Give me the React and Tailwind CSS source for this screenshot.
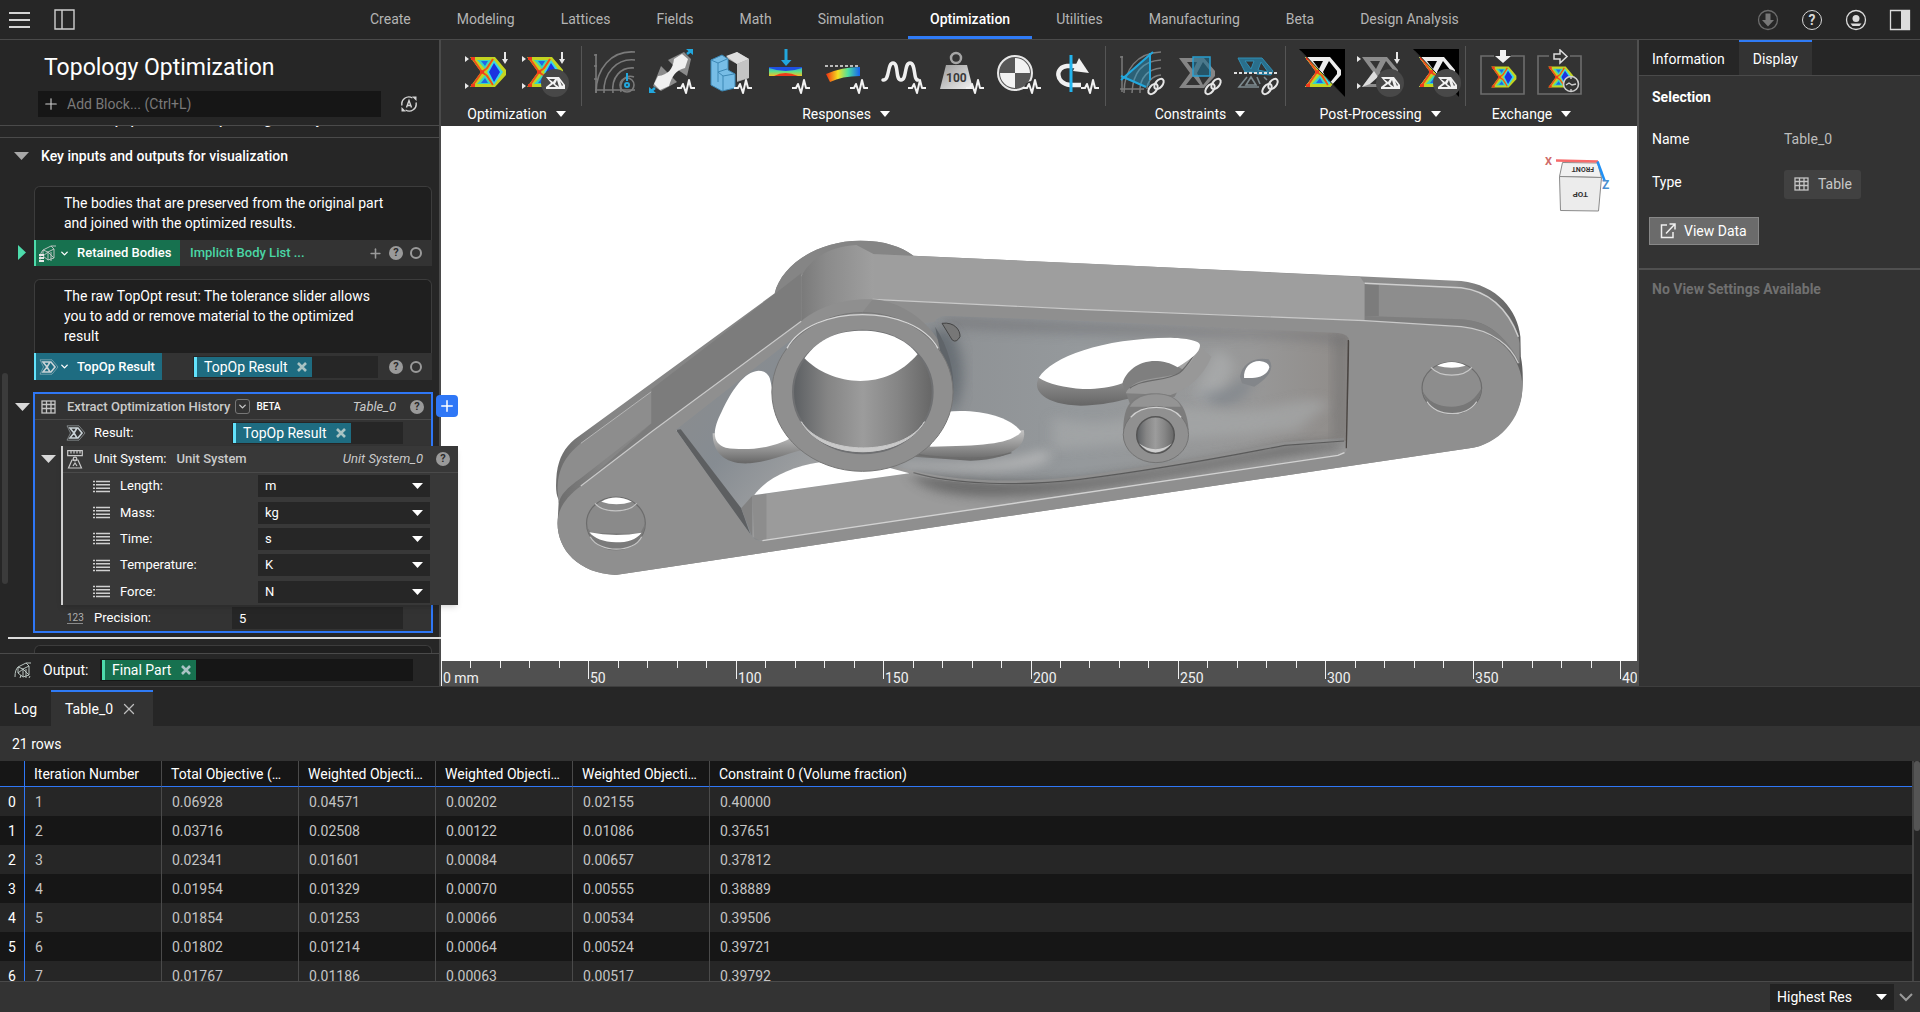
import React, { useState } from 'react';
import { X, ChevronDown, Plus } from 'lucide-react';

const MENU = ['Create', 'Modeling', 'Lattices', 'Fields', 'Math', 'Simulation', 'Optimization', 'Utilities', 'Manufacturing', 'Beta', 'Design Analysis'];

const UNITS = [
  { label: 'Length', options: ['m', 'cm', 'mm', 'in', 'ft'] },
  { label: 'Mass', options: ['kg', 'g', 'lb'] },
  { label: 'Time', options: ['s', 'ms', 'min'] },
  { label: 'Temperature', options: ['K', 'C', 'F'] },
  { label: 'Force', options: ['N', 'kN', 'lbf'] },
];

const COLUMNS = ['Iteration Number', 'Total Objective (…', 'Weighted Objecti…', 'Weighted Objecti…', 'Weighted Objecti…', 'Constraint 0 (Volume fraction)'];

const ROWS = [
  ['1', '0.06928', '0.04571', '0.00202', '0.02155', '0.40000'],
  ['2', '0.03716', '0.02508', '0.00122', '0.01086', '0.37651'],
  ['3', '0.02341', '0.01601', '0.00084', '0.00657', '0.37812'],
  ['4', '0.01954', '0.01329', '0.00070', '0.00555', '0.38889'],
  ['5', '0.01854', '0.01253', '0.00066', '0.00534', '0.39506'],
  ['6', '0.01802', '0.01214', '0.00064', '0.00524', '0.39721'],
  ['7', '0.01767', '0.01186', '0.00063', '0.00517', '0.39792'],
];

/* ---------- small icons ---------- */

const Caret = ({ className = 'w-[10px] h-[6px]' }) => (
  <svg viewBox="0 0 10 6" preserveAspectRatio="none" className={`shrink-0 fill-current ${className}`}>
    <path d="M0 0h10L5 6z" />
  </svg>
);

const HelpDot = () => (
  <button aria-label="Help" className="w-[14px] h-[14px] shrink-0 rounded-full bg-[#9a9a9a] text-[#2a2a2a] text-[11px] leading-[14px] font-bold text-center">
    ?
  </button>
);

const Ring = () => <span className="w-[12px] h-[12px] shrink-0 rounded-full border-2 border-[#9a9a9a]" />;

const TableIcon = () => (
  <svg viewBox="0 0 15 14" className="w-[15px] h-[14px] shrink-0" fill="none" stroke="#c4c4c4" strokeWidth="1.3">
    <rect x="1" y="1" width="13" height="12" />
    <path d="M1 4.500h13M1 8.500h13M5.500 1v12M10 1v12" />
  </svg>
);

const ListIcon = () => (
  <svg viewBox="0 0 17 13" className="w-[17px] h-[13px] shrink-0" stroke="#d0d0d0" strokeWidth="1.6">
    <path d="M0 1.500h2M3 1.500h14M0 4.800h2M3 4.800h14M0 8.200h2M3 8.200h14M0 11.500h2M3 11.500h14" />
  </svg>
);

const ResultIcon = () => (
  <svg viewBox="0 0 20 16" className="w-[20px] h-[16px] shrink-0" fill="none" stroke="#c9d2d6">
    <path d="M1 .8h12l6 7.200-6 7.200H1L4.500 8z" strokeWidth=".8" opacity=".6" />
    <path d="M4 3h8l4 5-4 5H4l4-5zM11 3L8 8l3 5" strokeWidth="1.600" />
  </svg>
);

const BodyIcon = ({ list }) => (
  <svg viewBox="0 0 18 18" className="w-[18px] h-[18px] shrink-0" fill="none" stroke="#b9c4c0" strokeWidth="1">
    <path d="M4 6l8-4 5 0M4 6l5 2 6-3-3-3M4 6v6l5 4V8M9 16l6-2V5M4 12l5-4 6 6M1 16c0-5 1-8 3-10M12 8v9" />
    {list ? <path d="M0 11h5M0 14h5M0 17h5" strokeWidth="2" stroke="#e8e8e8" /> : <path d="M6 17l1-3M15 17l1-2" />}
  </svg>
);

const UnitIcon = () => (
  <svg viewBox="0 0 16 19" className="w-[16px] h-[19px] shrink-0" fill="none" stroke="#c8c8c8" strokeWidth="1.200">
    <path d="M.7.7h14.600v5H.7zM4 1v2.500M7 1v2.500M10 1v2.500M13 1v2.500" />
    <path d="M5 10L1.500 18h13L11 10z" />
    <circle cx="8" cy="9" r="1.800" />
    <path d="M6 16l2-3 2 3" />
  </svg>
);

/* ---------- toolbar icons, all on a 48x48 box ---------- */

// heat coloured truss
const HeatTruss = ({ transform }) => (
  <g transform={transform}>
    <path d="M6 8h25l11 13v5L31 38H6l11-15z" fill="#c3d420" />
    <g filter="url(#heatSoft)">
      <path d="M9 10l9 13-9 13M18 23l5-4 6-9M18 23l5 4 6 9" fill="none" stroke="#f0501a" strokeWidth="2" />
      <path d="M13 11h14l-6 9z" fill="#38d6c0" />
      <path d="M13 35h14l-6-9z" fill="#38d6c0" />
      <path d="M17 12h7l-3 5zM17 34h7l-3-5z" fill="#1d68e8" />
      <path d="M30 11l9 12-9 13-7-13z" fill="#38d6e8" />
      <path d="M30 14l6 9-6 10-5-10z" fill="#1a32e0" />
      <path d="M7 9.500h4M7 36.500h4M16 23h4" stroke="#f03a1a" strokeWidth="3" />
    </g>
  </g>
);

const PlainTruss = ({ transform, color = '#ededed' }) => (
  <path
    transform={transform}
    fill={color}
    fillRule="evenodd"
    d="M6 8h25l11 13v5L31 38H6l11-15zM14 12h10l-4 8zM13 35h14l-7-9zM30 12l8 10v3l-8 10-6-12z"
  />
);

const Arrows = () => (
  <g fill="#e8e8e8">
    <path d="M1 7l4 3-4 3zM1 34l4 3-4 3z" />
    <path d="M40 3h2v7h2l-3 5-3-5h2z" />
  </g>
);

const TrussBadge = () => (
  <g>
    <circle cx="34" cy="34" r="14" fill="#484848" />
    <path
      fill="#f2f2f2"
      fillRule="evenodd"
      d="M25 28h13l6 8v4H25v-2l5-4zM28 30l4 3 2-3zM36 31l-2 4 4 3zM39 32l2 5 1-1zM28 38h7l-3-3z"
    />
  </g>
);

const PulseBadge = () => (
  <path d="M28 39h4l2-4 3 9 3-13 2 8h4" fill="none" stroke="#f2f2f2" strokeWidth="2" strokeLinejoin="round" />
);

const LinkBadge = () => (
  <g fill="#333" stroke="#e6e6e6" strokeWidth="2">
    <ellipse cx="34" cy="40" rx="3.500" ry="6" transform="rotate(40 34 40)" />
    <ellipse cx="40" cy="35" rx="3.500" ry="6" transform="rotate(40 40 35)" fill="none" />
  </g>
);

const ICONS = {
  topOpt: <><HeatTruss /><Arrows /></>,
  topOptFine: <><HeatTruss /><Arrows /><TrussBadge /></>,
  field: (
    <g fill="none" stroke="#7b7b7b" strokeWidth="1.600">
      <path d="M5 5v39M3 6h3M3 17h3M3 30h3M4 41h40" />
      <path d="M44 3C20 1 5 20 5 44M44 11C26 9 12 24 13 44M43 19C30 18 20 28 22 44M43 28c-8-3-15 4-13 15" />
      <circle cx="36" cy="36" r="7" />
      <circle cx="36" cy="36" r="2" stroke="#22a7dd" strokeWidth="2" />
      <path d="M36 24v8" stroke="#22a7dd" strokeWidth="2" />
    </g>
  ),
  stress: (
    <>
      <path d="M19 11L35 3l7 7-4 17-9-6zM12 17l-8 20 8 5 16-9z" fill="#8b8b8b" />
      <path d="M25 10l8-5 6 5-3 9c-9 2-13 8-16 18l-9 4-6-6 4-8c10-1 15-7 16-17z" fill="#f0f0f0" />
      <path d="M38 5l5-4M6 39l-5 4" stroke="#22a7dd" strokeWidth="2.500" />
      <path d="M37 0h7v6zM0 38v6h7z" fill="#22a7dd" />
      <PulseBadge />
    </>
  ),
  volume: (
    <>
      <path d="M20 9l11-6 12 7v19l-12 4V15z" fill="#a9a9a9" />
      <path d="M20 7l11-4 12 7-12 5z" fill="#dedede" />
      <path d="M31 15l12-5v19l-12 3z" fill="#c4c4c4" />
      <path d="M5 11l11-5 6 4v11l7 4v14l-13 3-11-6z" fill="#77bde6" stroke="#3d88b5" strokeWidth="1" />
      <path d="M5 11l7 3v19M12 14l9-4M12 23l9-3M12 23l5 4 11-2M17 27v15" fill="none" stroke="#3d88b5" strokeWidth="1" />
      <PulseBadge />
    </>
  ),
  displacement: (
    <>
      <rect x="5" y="18" width="33" height="9" fill="url(#bandV)" />
      <path d="M5 18h33v1q-16 6-33 0z" fill="#1e50e0" />
      <path d="M10 27q11-6 24 0z" fill="#ee3a18" />
      <path d="M20.500 0h3v11h4L22 17l-5-6h3.500z" fill="#22a7dd" />
      <PulseBadge />
    </>
  ),
  bend: (
    <>
      <path d="M4 25q16-7 34-7v9q-18 0-30 6z" fill="url(#bandH)" />
      <path d="M3 17h35" stroke="#e8e8e8" strokeWidth="1.600" strokeDasharray="3 2" />
      <PulseBadge />
    </>
  ),
  wave: (
    <>
      <path d="M3 31c7 1 4-17 10-17s2 17 8 17 3-17 9-17 3 17 8 17" fill="none" stroke="#f0f0f0" strokeWidth="3.500" strokeLinecap="round" />
      <PulseBadge />
    </>
  ),
  mass: (
    <>
      <circle cx="18" cy="9" r="5" fill="none" stroke="#a5a5a5" strokeWidth="2.500" />
      <path d="M8 16h21l6 24H2z" fill="url(#metal)" />
      <text x="8" y="33" fontSize="12" fontWeight="700" fill="#3a3a3a">100</text>
      <PulseBadge />
    </>
  ),
  balance: (
    <>
      <circle cx="20" cy="24" r="17" fill="#575757" stroke="#e8e8e8" strokeWidth="2" />
      <path d="M20 24V9a15 15 0 0 1 15 15zM20 24v15A15 15 0 0 1 5 24z" fill="#f2f2f2" />
      <circle cx="37" cy="40" r="8" fill="#333" />
      <PulseBadge />
    </>
  ),
  rotate: (
    <>
      <path d="M28 36H17C2 34 2 18 14 17h14" fill="none" stroke="#f0f0f0" strokeWidth="4.500" />
      <path d="M26 9l10 15-16-2z" fill="#f0f0f0" />
      <path d="M18 6v37" stroke="#22b4ee" strokeWidth="3" />
      <PulseBadge />
    </>
  ),
  fieldLink: (
    <>
      <g fill="none" stroke="#7b7b7b" strokeWidth="1.500">
        <path d="M3 7v36M1 8h3M1 40h24M42 3C18 4 5 20 5 44M42 11C25 12 14 22 13 44M42 19C30 20 20 28 21 44M42 26c-9 1-14 7-14 14" />
      </g>
      <path d="M31 4v32l-4 2L3 29z" fill="#22a7dd" opacity=".4" />
      <path d="M34 3L2 31M31 4v27M2 27l25 11" fill="none" stroke="#22a7dd" strokeWidth="2" />
      <LinkBadge />
    </>
  ),
  bodyLink: (
    <>
      <PlainTruss color="#858585" transform="translate(-3 1)" />
      <rect x="17" y="8" width="17" height="19" fill="#1b6f92" opacity=".55" />
      <rect x="17" y="8" width="17" height="19" fill="none" stroke="#2a9fd0" strokeWidth="1.500" />
      <LinkBadge />
    </>
  ),
  symmetry: (
    <>
      <path
        d="M5 9h24l11 13-2 4-14-1-5-2h-7zM12 12h9l-3 8zM28 13l7 10-10-2z"
        fill="#2a6f8c"
        stroke="#2f8fb5"
        strokeWidth="1"
        fillRule="evenodd"
      />
      <path d="M14 28L6 38h20M13 36l5-8 5 8zM24 28l3 7M31 28l3 3" fill="none" stroke="#7d8b90" strokeWidth="1.600" />
      <path d="M1 24h43" stroke="#ddd" strokeWidth="1.800" strokeDasharray="3 2" />
      <LinkBadge />
    </>
  ),
  postHeat: (
    <>
      <path d="M0 0h46v48z" fill="#000" />
      <PlainTruss />
      <g clipPath="url(#lowerHalf)"><HeatTruss /></g>
      <path d="M2 2l40 42" stroke="#222" strokeWidth="1" />
    </>
  ),
  postPlain: (
    <>
      <PlainTruss color="#8c8c8c" />
      <path d="M6 38L18 22l4 6-8 7z" fill="#dedede" />
      <Arrows />
      <TrussBadge />
    </>
  ),
  postFine: (
    <>
      <path d="M0 0h46v48z" fill="#000" />
      <PlainTruss />
      <g clipPath="url(#lowerHalf)"><HeatTruss /></g>
      <path d="M2 2l40 42" stroke="#222" strokeWidth="1" />
      <TrussBadge />
    </>
  ),
  importHeat: (
    <>
      <path d="M15 7H2v38h43V7H32" fill="none" stroke="#6d6d6d" strokeWidth="1.600" />
      <path d="M21 1h6v6h5l-8 7-8-7h5z" fill="#f2f2f2" />
      <HeatTruss transform="translate(8 12) scale(.7)" />
    </>
  ),
  exportHeat: (
    <>
      <path d="M13 7H2v38h43V7H34" fill="none" stroke="#6d6d6d" strokeWidth="1.600" />
      <path d="M18 5h6V1l7 6.500-7 6.500v-4h-6z" fill="none" stroke="#ddd" strokeWidth="1.500" />
      <HeatTruss transform="translate(8 12) scale(.7)" />
      <circle cx="35" cy="35" r="7.500" fill="#333" stroke="#cfcfcf" strokeWidth="1.600" />
      <path d="M30 36l3-2 3 2 4-1M35 28v2M35 40v2" fill="none" stroke="#cfcfcf" strokeWidth="1.400" />
    </>
  ),
};

const GROUPS = [
  { name: 'Optimization', icons: ['topOpt', 'topOptFine'], size: 'w-[141px] pl-[18px] pr-2' },
  { name: 'Responses', icons: ['field', 'stress', 'volume', 'displacement', 'bend', 'wave', 'mass', 'balance', 'rotate'], size: 'w-[524px] pl-1' },
  { name: 'Constraints', icons: ['fieldLink', 'bodyLink', 'symmetry'], size: 'w-[180px] pl-2' },
  { name: 'Post-Processing', icons: ['postHeat', 'postPlain', 'postFine'], size: 'w-[180px] pl-2' },
  { name: 'Exchange', icons: ['importHeat', 'exportHeat'], size: 'w-[123px] pl-2' },
];

const Toolbar = () => (
  <div className="h-[86px] shrink-0 flex bg-[#333] overflow-hidden">
    <svg className="absolute w-0 h-0">
      <defs>
        <linearGradient id="bandV" x2="0" y2="1"><stop offset="0" stopColor="#2aa0e8" /><stop offset=".5" stopColor="#5fe08a" /><stop offset="1" stopColor="#f5c020" /></linearGradient>
        <linearGradient id="bandH"><stop offset="0" stopColor="#f02c10" /><stop offset=".35" stopColor="#f5e020" /><stop offset=".65" stopColor="#4be0a0" /><stop offset="1" stopColor="#1660f0" /></linearGradient>
        <linearGradient id="metal" x2="1" y2="1"><stop offset="0" stopColor="#9a9a9a" /><stop offset="1" stopColor="#f2f2f2" /></linearGradient>
        <filter id="heatSoft"><feGaussianBlur stdDeviation=".7" /></filter>
        <clipPath id="lowerHalf"><path d="M0 0L46 48H0z" /></clipPath>
      </defs>
    </svg>
    {GROUPS.map((group, i) => (
      <React.Fragment key={group.name}>
        {i > 0 && <div className="w-px h-[60px] mt-[6px] bg-[#555] -ml-px" />}
        <div className={`flex flex-col pt-[9px] ${group.size}`}>
          <div className="flex">
            {group.icons.map((icon) => (
              <button key={icon} aria-label={icon} className="flex-1 flex justify-center">
                <svg viewBox="0 0 48 48" className="w-12 h-12">{ICONS[icon]}</svg>
              </button>
            ))}
          </div>
          <button className="flex items-center justify-center gap-[9px] h-[20px] mt-[7px] text-white">
            {group.name}
            <Caret />
          </button>
        </div>
      </React.Fragment>
    ))}
  </div>
);

/* ---------- top bar ---------- */

const TopBar = () => (
  <header className="relative h-10 shrink-0 flex items-stretch bg-[#262626] border-b border-[#4a4a4a]">
    <div className="w-[348px] shrink-0 flex items-center gap-6 pl-[9px]">
      <button aria-label="Menu">
        <svg viewBox="0 0 21 18" className="w-[21px] h-[18px]" stroke="#d4d4d4" strokeWidth="2">
          <path d="M0 2h21M0 9h21M0 16h21" />
        </svg>
      </button>
      <button aria-label="Toggle left panel">
        <svg viewBox="0 0 21 21" className="w-[21px] h-[21px]" fill="none" stroke="#cfcfcf" strokeWidth="1.400">
          <path d="M1 1h19v19H1zM8 1v19" />
        </svg>
      </button>
    </div>
    <nav className="flex gap-[2px]">
      {MENU.map((item) => (
        <button
          key={item}
          className={`px-[22px] border-b-3 whitespace-nowrap pt-[2px] ${item === 'Optimization' ? 'border-[#2f7bf6] text-white font-medium' : 'border-transparent text-[#b4b4b4]'}`}
        >
          {item}
        </button>
      ))}
    </nav>
    <div className="ml-auto flex items-center gap-[22px] pr-[9px]">
      <button aria-label="Download">
        <svg viewBox="0 0 22 22" className="w-[22px] h-[22px]">
          <circle cx="11" cy="11" r="9.500" fill="none" stroke="#6c6c6c" strokeWidth="1.300" />
          <path d="M8.500 4.500h5V11H17l-6 6.500L5 11h3.500z" fill="#777" />
        </svg>
      </button>
      <button aria-label="Help" className="w-[22px] h-[22px] flex items-center justify-center">
        <span className="w-[20px] h-[20px] rounded-full border border-[#d8d8d8] text-[#d8d8d8] font-bold leading-[18px]">?</span>
      </button>
      <button aria-label="Account">
        <svg viewBox="0 0 22 22" className="w-[22px] h-[22px]" fill="#dcdcdc">
          <circle cx="11" cy="11" r="9.500" fill="none" stroke="#dcdcdc" strokeWidth="1.300" />
          <circle cx="11" cy="9.500" r="3.500" />
          <path d="M5.500 14.500h11l-2 2.500h-7z" />
        </svg>
      </button>
      <button aria-label="Toggle right panel">
        <svg viewBox="0 0 22 22" className="w-[22px] h-[22px]">
          <path d="M1.500 1.500h19v19h-19z" fill="none" stroke="#dcdcdc" strokeWidth="1.300" />
          <path d="M12 1h9v20h-9z" fill="#dcdcdc" />
        </svg>
      </button>
    </div>
  </header>
);

/* ---------- left tree ---------- */

const Chip = ({ tone, children }) => (
  <span
    className={`h-[20px] flex items-center gap-[10px] pl-[7px] pr-[5px] border-l-3 text-[14px] text-white whitespace-nowrap ${tone === 'green' ? 'bg-[#17714f] border-[#4ddbab]' : 'bg-[#1e6c81] border-[#62e2fb]'}`}
  >
    {children}
    <button aria-label={`Remove ${children}`} className="text-[#a9c3c3]">
      <svg viewBox="0 0 10 10" className="w-[10px] h-[10px]" stroke="currentColor" strokeWidth="2.600">
        <path d="M1 1l8 8M9 1L1 9" />
      </svg>
    </button>
  </span>
);

const Comment = ({ children }) => (
  <div className="rounded-t-[6px] border border-b-0 border-[#3c3c3c] bg-[#1f1f1f] pl-[29px] pr-[44px] pt-[6px] pb-[7px] leading-[20px] text-white">
    {children}
  </div>
);

const BlockPanel = () => (
  <section className="relative -mx-px mt-3 border-2 border-[#2f77f6] bg-[#333] text-[13px]">
    <button aria-label="Collapse block" className="absolute -left-5 top-[9px] text-[#d8d8d8]">
      <Caret className="w-[15px] h-[8px]" />
    </button>
    <button aria-label="Add block after" className="absolute z-20 -right-[27px] top-px w-[22px] h-[22px] rounded-[4px] bg-[#2f77f6] text-white flex items-center justify-center">
      <Plus size={18} strokeWidth={2} />
    </button>

    <div className="h-[26px] flex items-center pl-[6px] pr-[7px] border-b border-[#4a4a4a] text-[#cacaca]">
      <TableIcon />
      <span className="ml-[11px] font-medium">Extract Optimization History</span>
      <button aria-label="Variants" className="ml-[5px] w-[15px] h-[15px] rounded-[3px] border border-[#777] flex items-center justify-center">
        <ChevronDown size={11} strokeWidth={3} />
      </button>
      <span className="ml-[6px] text-[10px] font-medium text-white">BETA</span>
      <span className="ml-auto mr-[14px] italic">Table_0</span>
      <HelpDot />
    </div>

    <div className="h-[26px] flex items-center pl-[31px] pr-[28px] text-white">
      <ResultIcon />
      <span className="ml-[8px] flex-1">Result:</span>
      <div className="w-[171px] h-[22px] flex items-center pl-px bg-[#262626]">
        <Chip>TopOp Result</Chip>
      </div>
    </div>

    <div className="relative z-10 ml-[26px] -mr-[27px] bg-[#383838] border-l-2 border-[#cfcfcf] shadow-md text-white">
      <button aria-label="Collapse unit system" className="absolute -left-[22px] top-[9px] text-[#d8d8d8]">
        <Caret className="w-[15px] h-[8px]" />
      </button>
      <div className="h-[27px] flex items-center pl-[4px] pr-[8px] border-b border-[#4a4a4a]">
        <UnitIcon />
        <span className="ml-[11px]">Unit System:</span>
        <span className="ml-[10px] font-medium text-[#cacaca]">Unit System</span>
        <span className="ml-auto mr-[13px] italic text-[#cacaca]">Unit System_0</span>
        <HelpDot />
      </div>
      <div className="h-[132px] grid pl-[30px] pr-[28px]">
        {UNITS.map(({ label, options }) => (
          <div key={label} className="flex items-center">
            <ListIcon />
            <label htmlFor={label} className="ml-[10px] flex-1">{label}:</label>
            <div className="relative w-[172px]">
              <select id={label} className="block w-full h-[22px] pl-[7px] appearance-none bg-[#262626] text-white outline-none">
                {options.map((o) => <option key={o}>{o}</option>)}
              </select>
              <Caret className="absolute right-[7px] top-[8px] w-[11px] h-[6px] pointer-events-none" />
            </div>
          </div>
        ))}
      </div>
    </div>

    <div className="h-[26px] flex items-center pl-[32px] pr-[28px] text-white">
      <span className="w-[16px] text-[10px] leading-[11px] text-[#b0b0b0] border-b border-[#8a8a8a]">123</span>
      <label htmlFor="precision" className="ml-[11px] flex-1">Precision:</label>
      <input id="precision" defaultValue="5" className="w-[171px] h-[22px] px-[7px] bg-[#262626] outline-none" />
    </div>
  </section>
);

const Sidebar = () => (
  <aside className="relative z-10 w-[441px] shrink-0 flex flex-col bg-[#262626] border-r-2 border-[#4a4a4a]">
    <div className="h-[86px] shrink-0 border-b border-[#4a4a4a] pt-[11px]">
      <h1 className="pl-[44px] text-[23px] leading-[34px] text-white">Topology Optimization</h1>
      <div className="flex items-center mt-[6px] pl-[38px]">
        <div className="w-[343px] h-[26px] flex items-center bg-[#161616] pl-[4px]">
          <Plus size={18} strokeWidth={1.5} className="text-[#cfcfcf]" />
          <input aria-label="Add Block" placeholder="Add Block... (Ctrl+L)" className="ml-[7px] flex-1 bg-transparent outline-none placeholder-[#7a7a7a]" />
        </div>
        <button aria-label="Auto refresh" className="ml-[19px]">
          <svg viewBox="0 0 18 18" className="w-[18px] h-[18px]" fill="none" stroke="#d4d4d4" strokeWidth="1.400">
            <path d="M2 10.500A7 7 0 0 1 12.500 3M16 7.500A7 7 0 0 1 5.500 15" />
            <path d="M12 1.500h4.500V6zM1.500 12v4.500H6z" fill="#d4d4d4" stroke="none" />
            <path d="M6.500 12.500L9 5.500l2.500 7M7.500 10.500h3" />
          </svg>
        </button>
      </div>
    </div>
    <div className="h-[12px] shrink-0 border-b border-[#4a4a4a] overflow-hidden">
      <p className="-mt-[17px] pl-[41px] leading-[20px] font-medium text-white whitespace-nowrap">Blocks that populate the shape design library</p>
    </div>

    <div className="relative flex-1 pl-[34px] pr-[7px]">
      <div className="absolute left-[2px] top-[235px] w-[6px] h-[211px] rounded-full bg-[#3b3b3b]" />
      <button className="-ml-5 h-9 flex items-center gap-[12px] font-medium text-white">
        <Caret className="w-[15px] h-[8px] text-[#a8a8a8]" />
        Key inputs and outputs for visualization
      </button>

      <div className="mt-3">
        <Comment>The bodies that are preserved from the original part and joined with the optimized results.</Comment>
        <div className="relative h-[26px] flex items-center bg-[#333] pr-[10px] text-[13px] font-medium">
          <button aria-label="Expand Retained Bodies" className="absolute -left-4 top-[5px]">
            <svg viewBox="0 0 8 15" className="w-[8px] h-[15px]"><path d="M0 0l8 7.500L0 15z" fill="#4ddbab" /></svg>
          </button>
          <div className="h-full flex items-center w-[146px] pl-[3px] bg-[#17714f] border-l-2 border-[#4ddbab] text-white">
            <BodyIcon list />
            <ChevronDown size={11} strokeWidth={3} className="ml-[2px]" />
            <span className="ml-[7px] whitespace-nowrap">Retained Bodies</span>
          </div>
          <a href="#list" className="ml-[10px] mr-auto text-[#4ad6a5]">Implicit Body List ...</a>
          <button aria-label="Add" className="mr-[6px] text-[#9a9a9a]"><Plus size={15} strokeWidth={2.5} /></button>
          <HelpDot />
          <span className="w-[7px]" />
          <Ring />
        </div>
      </div>

      <div className="mt-[13px]">
        <Comment>The raw TopOpt resut: The tolerance slider allows you to add or remove material to the optimized result</Comment>
        <div className="h-[27px] flex items-center bg-[#333] pr-[10px]">
          <div className="h-full flex items-center w-[128px] pl-[3px] bg-[#1e6c81] border-l-2 border-[#62e2fb] text-[13px] text-white">
            <ResultIcon />
            <ChevronDown size={11} strokeWidth={3} />
            <span className="ml-[7px] font-medium whitespace-nowrap">TopOp Result</span>
          </div>
          <div className="ml-[31px] mr-auto w-[185px] h-[22px] flex items-center pl-px bg-[#262626]">
            <Chip>TopOp Result</Chip>
          </div>
          <HelpDot />
          <span className="w-[7px]" />
          <Ring />
        </div>
      </div>

      <BlockPanel />
      <div className="-ml-[26px] -mr-[9px] mt-1 h-[2px] bg-[#dcdcdc]" />
      <div className="mt-[6px] h-[8px] rounded-t-[6px] border border-b-0 border-[#3c3c3c] bg-[#1f1f1f]" />
    </div>

    <div className="h-[33px] shrink-0 flex items-center border-t border-[#4a4a4a] pl-[14px] pr-[26px] text-white">
      <BodyIcon />
      <span className="ml-[11px] w-[57px]">Output:</span>
      <div className="flex-1 h-[22px] flex items-center pl-[2px] bg-[#161616]">
        <Chip tone="green">Final Part</Chip>
      </div>
    </div>
  </aside>
);

/* ---------- viewport ---------- */

const Bracket = () => (
  <g transform="translate(-1 104) scale(.40816 .33333)">
    <defs>
      <linearGradient id="boss"><stop offset="0" stopColor="#7a7a7a" /><stop offset=".35" stopColor="#8b8b8b" /><stop offset="1" stopColor="#9f9f9f" /></linearGradient>
      <linearGradient id="bore"><stop offset="0" stopColor="#5c5f62" /><stop offset=".25" stopColor="#858585" /><stop offset=".5" stopColor="#9c9c9c" /><stop offset=".75" stopColor="#858585" /><stop offset="1" stopColor="#666" /></linearGradient>
      <linearGradient id="web"><stop offset="0" stopColor="#858b90" /><stop offset=".3" stopColor="#8b8e91" /><stop offset=".6" stopColor="#95999c" /><stop offset=".85" stopColor="#989898" /><stop offset="1" stopColor="#8f8b88" /></linearGradient>
      <linearGradient id="strut" x2="1" y2="1"><stop offset="0" stopColor="#8c8c8c" /><stop offset=".5" stopColor="#868c92" /><stop offset="1" stopColor="#a8a8a8" /></linearGradient>
      <linearGradient id="lip" x2="0" y2="1"><stop offset="0" stopColor="#c4c4c4" /><stop offset=".6" stopColor="#8c8c8c" /><stop offset="1" stopColor="#666" /></linearGradient>
      <linearGradient id="rim"><stop offset="0" stopColor="#6c6c6c" /><stop offset=".05" stopColor="#858585" /><stop offset=".93" stopColor="#8c8c8c" /><stop offset="1" stopColor="#5f5f5f" /></linearGradient>
      <filter id="soft" x="-30%" y="-60%" width="160%" height="220%"><feGaussianBlur stdDeviation="16" /></filter>
      <clipPath id="pocket"><path d="M578 600L860 330L1213 275Q1215 260 1240 258L1568 272L2200 309Q2228 312 2228 335L2222 655Q2222 672 2200 676L790 932Q775 934 765 920Z" /></clipPath>
    </defs>

    {/* whole silhouette, darker rims of the rear plate show through */}
    <path d="M430 1035C340 1030 288 960 288 880L291 810C282 790 284 760 286 730C292 680 305 655 330 628L820 190C835 110 920 32 1030 32C1090 32 1130 50 1160 77L2502 153C2590 165 2640 240 2647 320L2648 380C2655 420 2654 480 2648 510C2630 590 2580 645 2522 655L1372 862Z" fill="url(#rim)" />
    <path d="M820 190C835 110 920 32 1030 32C1090 32 1130 50 1160 77L1060 72L885 140Z" fill="#858585" />

    {/* rear lugs */}
    <path d="M288 780C288 720 305 680 345 640L518 485V580L345 745C310 775 295 795 291 820Z" fill="#8d8d8d" />
    <path d="M345 640L518 485" fill="none" stroke="#b5b5b5" strokeWidth="1" vectorEffect="non-scaling-stroke" />
    <path d="M2265 162L2502 173C2590 190 2640 270 2645 340V400C2600 300 2560 272 2500 268L2265 258Z" fill="#8d8d8d" />
    <path d="M2265 162L2300 164V258H2265Z" fill="#7c7c7c" />
    <path d="M2265 258L2500 268C2560 272 2610 310 2646 400L2640 400C2600 310 2550 292 2500 290L2265 274Z" fill="#7f7f7f" />
    <path d="M2265 160L2502 173C2580 185 2620 250 2642 320" fill="none" stroke="#cfcfcf" strokeWidth="1.500" vectorEffect="non-scaling-stroke" />

    {/* slanted left face and top face */}
    <path d="M518 478L885 130V275L520 605L340 775L518 580Z" fill="#7c7c7c" />
    <path d="M885 275V135C920 100 985 70 1060 72L1568 100L2254 140L2265 160V272L1568 238L1060 208C980 225 930 245 885 275Z" fill="#9e9e9e" />
    <path d="M885 300V140C905 90 950 50 1020 45L1062 72V215C990 235 930 255 885 300Z" fill="url(#boss)" />

    {/* front plate */}
    <path d="M430 1035C340 1030 288 960 288 880C288 835 310 800 345 768L520 604L885 274C930 225 1000 205 1060 208L1568 238L2265 272L2502 290C2600 305 2652 390 2652 470C2652 570 2590 645 2522 655L1372 862Z" fill="#8f8f8f" />
    <path d="M345 768L520 604L885 274M1060 208L1568 238L2265 272L2502 290C2580 300 2625 350 2642 400" fill="none" stroke="#c9c9c9" strokeWidth="1.200" vectorEffect="non-scaling-stroke" />

    {/* pocket with the organic web */}
    <g clipPath="url(#pocket)">
      <path d="M560 240H2240V940H560Z" fill="url(#web)" />
      <path d="M578 600L860 330V640L930 697C850 710 800 760 738 835Z" fill="url(#strut)" />
      <path d="M1230 258L2228 310V345C2000 300 1600 330 1235 290Z" fill="#6f7073" opacity=".55" filter="url(#soft)" />
      <path d="M1900 360C1960 380 1960 440 1880 520C1860 520 1840 500 1850 480Z" fill="#b0b2b3" opacity=".6" filter="url(#soft)" />
      <path d="M1930 480C2000 400 2010 460 1960 510C1920 540 1880 520 1850 490Z" fill="#707984" opacity=".45" filter="url(#soft)" />
      <path d="M1250 300C1290 380 1290 480 1250 560L1200 300Z" fill="#5f666d" opacity=".8" filter="url(#soft)" />
      <path d="M1500 560C1700 620 1720 500 1900 540C2050 560 2100 480 2180 520L2100 600L1500 660Z" fill="#a9abac" opacity=".6" filter="url(#soft)" />
      {/* lower beam */}
      <path d="M765 797L1150 730L1372 764L1568 748C1800 715 1980 670 2080 645L2222 632V676L790 935L765 920Z" fill="#9b9b9b" />
      <path d="M1150 730C1280 750 1420 765 1568 748C1800 715 1980 670 2080 645L2210 635L2205 655C1900 700 1600 800 1350 800C1250 800 1180 780 1150 730Z" fill="#4c4c4c" opacity=".6" filter="url(#soft)" />
      <path d="M1110 712C1240 762 1420 768 1568 744C1800 705 1960 665 2070 642L2215 629" fill="none" stroke="#8f8f8f" strokeWidth="4" vectorEffect="non-scaling-stroke" />
      <path d="M1160 728C1260 764 1420 770 1568 748C1800 712 1960 671 2070 646L2215 633" fill="none" stroke="#5a5a5a" strokeWidth="1.200" vectorEffect="non-scaling-stroke" />
      <path d="M1140 695C1260 710 1400 700 1480 660C1540 700 1400 740 1110 715Z" fill="#c4c4c4" opacity=".7" filter="url(#soft)" />
      <path d="M578 600L765 930L738 835L590 598Z" fill="#5d5f61" />
      <path d="M738 835L765 797V920Z" fill="#828282" />
      <path d="M765 797L800 790V930H770Z" fill="#878787" opacity=".7" />
      <path d="M578 600V615L765 925" fill="none" stroke="#bdbdbd" strokeWidth="1.500" vectorEffect="non-scaling-stroke" />
      <path d="M2190 320Q2192 500 2188 630H2225V310Z" fill="#6c6c6c" opacity=".5" filter="url(#soft)" />
      <path d="M2227 330L2222 655" stroke="#4a4542" strokeWidth="2.500" vectorEffect="non-scaling-stroke" />
    </g>
    <path d="M2216 668L2200 676L790 932" fill="none" stroke="#d2d2d2" strokeWidth="1.400" vectorEffect="non-scaling-stroke" />

    {/* openings */}
    <path d="M668 610C668 670 700 705 760 700C830 690 860 660 930 650L850 615Z" fill="url(#lip)" />
    <path d="M780 422C745 425 715 480 690 545C665 605 668 640 700 653C760 665 820 650 856 626L830 560L808 445Q800 422 780 422Z" fill="#fff" />
    <path d="M770 795L1150 730L1060 700L930 697C860 710 800 745 770 795Z" fill="#fff" />
    <path d="M1180 640L1430 600C1440 650 1390 690 1300 692L1160 680Z" fill="url(#lip)" />
    <path d="M1160 672C1260 690 1350 690 1400 668" fill="none" stroke="#6c6c6c" strokeWidth="1.500" vectorEffect="non-scaling-stroke" />
    <path d="M1240 545C1330 535 1400 565 1424 605C1400 640 1340 648 1200 650Z" fill="#fff" />
    <path d="M1467 445C1450 480 1480 525 1570 527C1650 525 1700 500 1760 480C1830 470 1855 400 1862 345L1800 400L1690 440Z" fill="url(#lip)" />
    <path d="M1672 460C1675 420 1710 393 1752 393C1790 393 1812 410 1830 430L1800 500L1690 520Z" fill="#7f7f7f" />
    <path d="M1680 490C1700 440 1760 450 1810 430C1840 410 1850 370 1862 350L1890 380C1870 440 1830 480 1790 495Z" fill="#989898" />
    <path d="M1690 475C1720 445 1780 455 1812 428C1835 405 1845 375 1860 352" fill="none" stroke="#6a6a6a" strokeWidth="1.200" vectorEffect="non-scaling-stroke" />
    <path d="M1467 443C1500 380 1620 325 1790 323C1840 325 1862 335 1862 345C1862 370 1840 385 1807 412C1790 398 1770 393 1752 393C1710 393 1680 425 1672 460C1640 475 1600 478 1575 477C1530 472 1490 462 1467 443Z" fill="#fff" />
    <path d="M1960 440C1965 400 1995 380 2030 388C2045 410 2035 440 1995 470L1965 460Z" fill="#83868a" />
    <path d="M1970 444C1968 415 1985 393 2008 393Q2030 395 2032 412C2028 435 2005 446 1985 444Z" fill="#fff" />
    <path d="M1230 280C1260 275 1275 300 1274 320Q1265 340 1255 330Z" fill="#777" stroke="#444" strokeWidth="1" vectorEffect="non-scaling-stroke" />

    {/* main boss */}
    <path d="M1060 208C1150 215 1260 320 1258 490L1200 330L1035 247Z" fill="#888" />
    <path d="M1213 290C1245 350 1262 420 1257 500L1225 360Z" fill="#5f6469" />
    <ellipse cx="1035" cy="486" rx="222" ry="238" fill="#8f8f8f" stroke="#767676" strokeWidth="1" vectorEffect="non-scaling-stroke" />
    <path d="M850 355C910 220 1160 220 1220 355" fill="none" stroke="#d6d6d6" strokeWidth="1.300" vectorEffect="non-scaling-stroke" />
    <ellipse cx="1036" cy="486" rx="171" ry="184" fill="url(#bore)" stroke="#6f7072" strokeWidth="2" vectorEffect="non-scaling-stroke" />
    <path d="M893 385C930 320 980 302 1036 302C1090 302 1140 325 1170 373C1130 430 1080 453 1030 453C975 453 925 425 893 385Z" fill="#fff" />
    <path d="M885 575C940 695 1130 695 1187 575C1135 680 940 680 885 575Z" fill="#c9c9c9" stroke="#c9c9c9" strokeWidth="1" vectorEffect="non-scaling-stroke" />

    {/* small boss */}
    <path d="M1674 600C1674 520 1700 490 1752 490C1800 490 1830 520 1834 600Z" fill="#7c7c7c" />
    <path d="M1690 530C1710 480 1800 480 1815 530L1752 530Z" fill="#949494" />
    <ellipse cx="1754" cy="614" rx="80" ry="84" fill="#909090" stroke="#747474" strokeWidth="1" vectorEffect="non-scaling-stroke" />
    <path d="M1692 562C1720 522 1790 522 1816 562" fill="none" stroke="#d0d0d0" strokeWidth="1.300" vectorEffect="non-scaling-stroke" />
    <ellipse cx="1753" cy="615" rx="46" ry="55" fill="url(#bore)" stroke="#555" strokeWidth="1.500" vectorEffect="non-scaling-stroke" />
    <path d="M1712 640Q1753 695 1794 640Q1753 675 1712 640Z" fill="#cfcfcf" />

    {/* lug holes */}
    <ellipse cx="431" cy="880" rx="72" ry="79" fill="#8a8a8a" stroke="#6c6c6c" strokeWidth="1.200" vectorEffect="non-scaling-stroke" />
    <path d="M360 890C365 930 395 957 431 958C470 957 500 930 503 880L490 912L370 908Z" fill="#7a7a7a" />
    <path d="M395 815Q430 790 470 815Q432 830 395 815Z" fill="#fff" />
    <path d="M366 907Q430 922 494 908C480 930 460 937 431 937C400 936 378 925 366 907Z" fill="#fff" />
    <path d="M380 820C400 850 460 850 482 820M368 920C390 970 475 970 494 920" fill="none" stroke="#c4c4c4" strokeWidth="1.200" vectorEffect="non-scaling-stroke" />
    <ellipse cx="2479" cy="474" rx="73" ry="78" fill="#8d8d8d" stroke="#6c6c6c" strokeWidth="1.200" vectorEffect="non-scaling-stroke" />
    <path d="M2406 480C2415 525 2445 551 2479 551C2520 550 2548 520 2552 475C2530 520 2505 530 2479 530C2445 530 2420 515 2406 480Z" fill="#777" />
    <path d="M2443 407Q2479 385 2513 407Q2479 420 2443 407Z" fill="#fff" />
    <path d="M2428 412C2450 443 2508 443 2528 412M2418 515C2445 563 2515 563 2540 515" fill="none" stroke="#c9c9c9" strokeWidth="1.200" vectorEffect="non-scaling-stroke" />
  </g>
);

const ViewCube = () => (
  <g transform="translate(1059 -126)" fontWeight="700">
    <path d="M62.500 162.500L97.500 163l4 14.500-42-1z" fill="#f1f1f1" stroke="#8a8a8a" />
    <path d="M59.500 176.500l42 1-3 33.500-38-.5z" fill="#ececec" stroke="#8a8a8a" />
    <path d="M56 160.500l42 1" stroke="#f76a6a" strokeWidth="2.500" />
    <path d="M97.500 161.500l7 19" stroke="#2090f5" strokeWidth="2.500" />
    <text x="45" y="165" fontSize="11" fill="#cf6a6a">X</text>
    <text x="102" y="189" fontSize="12" fill="#4a8fd0">Z</text>
    <text transform="translate(94 167) rotate(180)" fontSize="7" fill="#333">FRONT</text>
    <text transform="translate(88 192) rotate(180)" fontSize="8" fill="#333">TOP</text>
  </g>
);

const Ruler = () => (
  <div className="h-[25px] shrink-0 overflow-hidden bg-[#505050]">
    <svg viewBox="0 0 1196 25" preserveAspectRatio="xMinYMin slice" className="block w-full h-[25px]" fill="#f0f0f0" shapeRendering="crispEdges">
      {Array.from({ length: 41 }, (_, i) => {
        const x = Math.round((i * 1179) / 40);
        const tall = i === 0 ? 25 : i % 5 === 0 ? 18 : 7;
        return <rect key={i} x={x} y="0" width="1" height={tall} />;
      })}
      {Array.from({ length: 9 }, (_, i) => (
        <text key={i} x={Math.round((i * 1179) / 8) + 2} y="22" fontSize="14">{['0 mm', '50', '100', '150', '200', '250', '300', '350', '40'][i]}</text>
      ))}
    </svg>
  </div>
);

const Viewport = () => (
  <div className="flex-1 min-h-0 flex flex-col">
    <div className="flex-1 min-h-0 bg-white">
      <svg viewBox="0 0 1196 535" className="w-full h-full block">
        <Bracket />
        <ViewCube />
      </svg>
    </div>
    <Ruler />
  </div>
);

/* ---------- right panel ---------- */

const InfoPanel = () => {
  const [tab, setTab] = useState('Display');
  return (
    <aside className="w-[283px] shrink-0 bg-[#333] border-l-2 border-[#505050] text-white">
      <div className="h-9 flex bg-[#262626] border-b border-[#4a4a4a]">
        {['Information', 'Display'].map((name) => (
          <button
            key={name}
            onClick={() => setTab(name)}
            className={`px-[14px] border-t-2 first:pl-[13px] ${tab === name ? 'bg-[#333] border-[#2f7bf6]' : 'border-transparent'}`}
          >
            {name}
          </button>
        ))}
      </div>
      <div className="h-[194px] border-b-2 border-[#505050] pl-[13px]">
        <h2 className="pt-[11px] leading-[20px] font-bold">Selection</h2>
        <div className="mt-[16px] grid grid-cols-[132px_1fr] items-center">
          <span className="h-[32px] flex items-center">Name</span>
          <span className="text-[#bdbdbd]">Table_0</span>
          <span className="h-[42px] mt-[8px] flex items-start pt-[9px]">Type</span>
          <span className="mt-[8px] justify-self-start h-[29px] w-[77px] flex items-center gap-[9px] pl-[10px] rounded-[3px] bg-[#414141] text-[#c8c8c8]">
            <TableIcon />
            Table
          </span>
        </div>
        <button className="-ml-[3px] mt-[12px] w-[110px] h-[28px] flex items-center gap-[8px] pl-[10px] bg-[#6b6b6b] border border-[#888]">
          <svg viewBox="0 0 16 16" className="w-4 h-4" fill="none" stroke="#f0f0f0" strokeWidth="1.500">
            <path d="M7 2H1.500v12.500H13V9M6 10.500l8.500-9M9.500 1h5.500v5.500" />
          </svg>
          View Data
        </button>
      </div>
      <p className="pl-[13px] pt-[9px] leading-[20px] font-bold text-[#707070]">No View Settings Available</p>
    </aside>
  );
};

/* ---------- bottom panel ---------- */

const DataPanel = () => (
  <section className="h-[326px] shrink-0 flex flex-col bg-[#262626] border-t border-[#3e3e3e] text-white">
    <div className="h-[39px] shrink-0 flex items-end">
      <button className="w-[51px] h-[36px] pt-[2px]">Log</button>
      <div className="w-[102px] h-[36px] flex items-center pl-[14px] bg-[#333] border-t-2 border-[#2f7bf6]">
        <button>Table_0</button>
        <button aria-label="Close tab" className="ml-[7px] text-[#bdbdbd]"><X size={18} strokeWidth={1.75} /></button>
      </div>
    </div>
    <div className="h-[35px] shrink-0 flex items-center pl-[12px] bg-[#333]">21 rows</div>

    <div className="flex-1 min-h-0 flex overflow-hidden">
      <table className="flex-1 table-fixed border-separate border-spacing-0 self-start">
        <colgroup>
          <col className="w-[25px]" />
          {COLUMNS.slice(1).map((_, i) => <col key={i} className="w-[137px]" />)}
          <col />
        </colgroup>
        <thead>
          <tr className="h-[26px] bg-[#161616] text-left">
            <th aria-label="Row" className="border-b border-r border-[#2f77f6]" />
            {COLUMNS.map((name, i) => (
              <th key={i} className={`p-0 pt-px pl-[9px] border-b border-b-[#2f77f6] font-normal whitespace-nowrap ${i < 5 ? 'border-r border-r-[#4a4a4a]' : ''}`}>
                {name}
              </th>
            ))}
          </tr>
        </thead>
        <tbody>
          {ROWS.map((row, r) => (
            <tr key={r} className="h-[29px] odd:bg-[#262626] even:bg-[#161616] text-[#c4c4c4]">
              <th className="p-0 border-r border-[#2f77f6] font-normal text-center text-white">{r}</th>
              {row.map((value, i) => (
                <td key={i} className={`p-0 pl-[10px] ${i < 5 ? 'border-r border-[#4a4a4a]' : ''}`}>{value}</td>
              ))}
            </tr>
          ))}
        </tbody>
      </table>
      <div className="w-[8px] shrink-0 border-l-2 border-[#424242]">
        <div className="h-[70px] rounded-full bg-[#555]" />
      </div>
    </div>

    <footer className="h-[31px] shrink-0 flex items-center justify-end bg-[#333] border-t border-[#4a4a4a] pr-[6px]">
      <div className="relative w-[124px]">
        <select aria-label="Resolution" className="block w-full h-[26px] pl-[7px] appearance-none bg-[#222] outline-none">
          <option>Highest Res</option>
          <option>Medium Res</option>
          <option>Lowest Res</option>
        </select>
        <Caret className="absolute right-[7px] top-[10px] w-[11px] h-[6px] pointer-events-none" />
      </div>
      <button aria-label="Collapse panel" className="ml-[4px] text-[#9a9a9a]">
        <svg viewBox="0 0 16 10" className="w-[16px] h-[10px]" fill="none" stroke="currentColor" strokeWidth="2">
          <path d="M2 2l6 6 6-6" />
        </svg>
      </button>
    </footer>
  </section>
);

const App = () => (
  <div className="h-screen flex flex-col overflow-hidden bg-[#262626] font-['Roboto',sans-serif] text-[14px] leading-[20px]">
    <TopBar />
    <main className="flex-1 min-h-0 flex">
      <Sidebar />
      <div className="flex-1 min-w-0 flex flex-col">
        <Toolbar />
        <Viewport />
      </div>
      <InfoPanel />
    </main>
    <DataPanel />
  </div>
);

export default App;
